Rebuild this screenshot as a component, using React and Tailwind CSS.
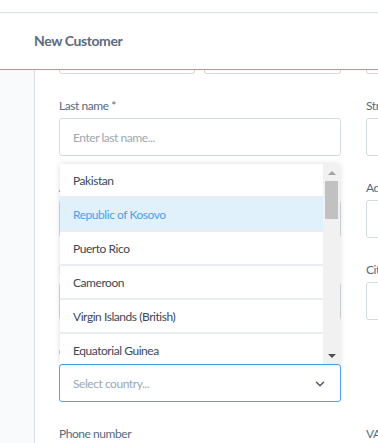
import React from "react";
import { ChevronDown } from "lucide-react";

const countries = [
  "Pakistan",
  "Republic of Kosovo",
  "Puerto Rico",
  "Cameroon",
  "Virgin Islands (British)",
  "Equatorial Guinea",
];

function Label({ children }) {
  return (
    <div className="h-[20px] leading-[20px] text-[12px] tracking-[-0.45px] text-[#586a7d] mb-[2px] whitespace-nowrap">
      {children}
    </div>
  );
}

function Input({ placeholder }) {
  return (
    <div className="h-[38px] border border-[#d3dbe2] rounded-[3px] bg-white flex items-center pl-[13px] pt-[1px] text-[12px] tracking-[-0.45px] text-[#9ba7b4] whitespace-nowrap">
      {placeholder}
    </div>
  );
}

function Dropdown() {
  return (
    <div className="absolute left-[1px] bottom-full w-[280px] h-[200px] bg-white shadow-[0_0_6px_rgba(0,0,0,0.14)] flex overflow-hidden z-10">
      <div className="flex-1 flex flex-col overflow-hidden">
        {countries.map((c, i) => (
          <div
            key={c}
            className={
              "shrink-0 h-[34px] flex items-center pl-[13px] pt-[2px] text-[12px] tracking-[-0.45px] border-b-2 border-[#e9edf1] whitespace-nowrap " +
              (i === 1 ? "bg-[#e1f1fc] text-[#4ba0f0]" : "bg-white text-[#3c4858]")
            }
          >
            {c}
          </div>
        ))}
      </div>
      <div className="w-[17px] bg-[#f1f1f1] flex flex-col items-center">
        <div className="h-[17px] flex items-center justify-center">
          <div className="w-0 h-0 border-l-[4px] border-r-[4px] border-b-[4px] border-l-transparent border-r-transparent border-b-[#a3a3a3]" />
        </div>
        <div className="w-[13px] h-[38px] bg-[#c1c1c1]" />
        <div className="flex-1" />
        <div className="h-[17px] flex items-center justify-center">
          <div className="w-0 h-0 border-l-[4px] border-r-[4px] border-t-[4px] border-l-transparent border-r-transparent border-t-[#505050]" />
        </div>
      </div>
    </div>
  );
}

export default function App() {
  return (
    <div className="w-[378px] h-[443px] overflow-hidden bg-white font-['Source_Sans_Pro','Lato',sans-serif] relative">
      <div className="h-[12px] bg-white" />
      <div className="h-[58px] border-t border-b border-t-[#d6dde3] border-b-[#e8866a] flex items-center pl-[34px] pb-[2px]">
        <span className="text-[14px] font-bold text-[#5b6b7f] tracking-[-0.4px]">New Customer</span>
      </div>
      <div className="flex h-[400px]">
        <div className="w-[35px] shrink-0 bg-[#f8fafb] border-r border-[#d6dde3]" />
        <div className="pl-[24px] shrink-0">
          <div className="grid grid-cols-[282px_282px] gap-x-[25px]">
            <div className="flex gap-[9px]">
              <div className="w-[136px] h-[4px] border-x border-b border-[#d3dbe2] rounded-b-[3px]" />
              <div className="w-[137px] h-[4px] border-x border-b border-[#d3dbe2] rounded-b-[3px]" />
            </div>
            <div className="h-[4px] border-x border-b border-[#d3dbe2] rounded-b-[3px]" />
          </div>
          <div className="grid grid-cols-[282px_282px] gap-x-[25px] gap-y-[22px] mt-[22px]">
            <div>
              <Label>Last name *</Label>
              <Input placeholder="Enter last name..." />
            </div>
            <div>
              <Label>Street</Label>
              <Input placeholder="Enter street..." />
            </div>
            <div>
              <Label>Account number</Label>
              <Input placeholder="" />
            </div>
            <div>
              <Label>Address line 2</Label>
              <Input placeholder="" />
            </div>
            <div>
              <Label>Email</Label>
              <Input placeholder="" />
            </div>
            <div>
              <Label>City</Label>
              <Input placeholder="" />
            </div>
            <div>
              <Label>Country</Label>
              <div className="relative">
                <Dropdown />
                <div className="h-[38px] border border-[#45a7f5] rounded-[3px] bg-white flex items-center justify-between pl-[13px] pr-[13px] pt-[1px] text-[12px] tracking-[-0.45px] text-[#9ba7b4]">
                  <span>Select country...</span>
                  <ChevronDown size={14} strokeWidth={2.5} className="text-[#4b5a6c]" />
                </div>
              </div>
            </div>
            <div />
            <div>
              <Label>Phone number</Label>
              <Input placeholder="" />
            </div>
            <div>
              <Label>VAT number</Label>
              <Input placeholder="" />
            </div>
          </div>
        </div>
      </div>
    </div>
  );
}
